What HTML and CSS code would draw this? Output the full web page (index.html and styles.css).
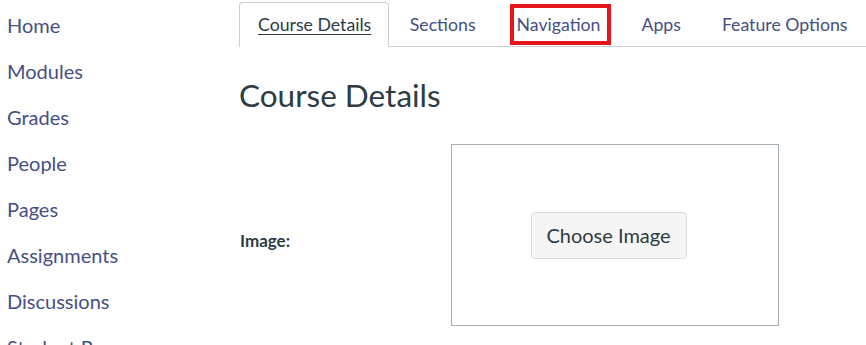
FILE: index.html
```html
<!DOCTYPE html>
<html>
<head>
<meta charset="utf-8">
<link rel="stylesheet" href="styles.css">
</head>
<body>
<div class="page">
  <nav class="sidenav">
    <a class="navlink">Home</a>
    <a class="navlink">Modules</a>
    <a class="navlink">Grades</a>
    <a class="navlink">People</a>
    <a class="navlink">Pages</a>
    <a class="navlink">Assignments</a>
    <a class="navlink">Discussions</a>
    <a class="navlink">Student Resources</a>
  </nav>
  <main class="content">
    <div class="tabs">
      <div class="tab active"><span class="tab-text">Course Details</span></div>
      <div class="tab"><span class="tab-text">Sections</span></div>
      <div class="tab"><span class="tab-text highlighted">Navigation</span></div>
      <div class="tab"><span class="tab-text">Apps</span></div>
      <div class="tab"><span class="tab-text">Feature Options</span></div>
      <div class="tab-fill"></div>
    </div>
    <h1 class="title">Course Details</h1>
    <div class="field">
      <label class="field-label">Image:</label>
      <div class="image-box">
        <button class="btn">Choose Image</button>
      </div>
    </div>
  </main>
</div>
</body>
</html>
```

FILE: styles.css
```css
* { box-sizing: border-box; }
html, body { margin: 0; padding: 0; background: #fff; }
body {
  font-family: Lato, "Noto Sans", sans-serif;
  color: #2d3b45;
  overflow: hidden;
  height: 345px;
}
.page {
  display: flex;
  align-items: flex-start;
}
.sidenav {
  width: 239px;
  flex: none;
  display: flex;
  flex-direction: column;
  padding-left: 7px;
  padding-top: 12px;
}
.navlink {
  font-size: 20px;
  line-height: 26px;
  height: 46px;
  color: #454f85;
  white-space: nowrap;
}
.content {
  flex: 1;
  display: flex;
  flex-direction: column;
  padding-top: 2px;
}
.tabs {
  display: flex;
  align-items: stretch;
  height: 45px;
}
.tab {
  padding: 0 20.5px;
  display: flex;
  align-items: center;
  font-size: 17.7px;
  color: #454f85;
  border-bottom: 1px solid #c7cdd1;
  border-top: 1px solid transparent;
  white-space: nowrap;
}
.tab.active {
  padding: 0 17px 0 18px;
  border: 1px solid #c7cdd1;
  border-bottom-color: #fff;
  border-radius: 4px 4px 0 0;
  color: #2d3b45;
}
.tab.active .tab-text {
  text-decoration: underline;
  text-underline-offset: 3px;
}
.tab-fill {
  flex: 1;
  border-bottom: 1px solid #c7cdd1;
}
.highlighted {
  position: relative;
}
.highlighted::after {
  content: "";
  position: absolute;
  left: -7px;
  right: -11px;
  top: -10px;
  bottom: -10px;
  border: 4px solid #e8141c;
}
.title {
  margin: 28px 0 0 0;
  font-size: 31.5px;
  font-weight: 400;
  line-height: 40px;
  color: #2d3b45;
}
.field {
  display: flex;
  align-items: center;
  margin-top: 29px;
}
.field-label {
  width: 212px;
  padding-left: 1px;
  margin-top: 10px;
  font-size: 17px;
  font-weight: 700;
  color: #2d3b45;
}
.image-box {
  width: 328px;
  height: 182px;
  border: 1px solid #a5afb5;
  display: flex;
  align-items: center;
  justify-content: center;
}
.btn {
  font-family: Lato, "Noto Sans", sans-serif;
  font-size: 20px;
  color: #2d3b45;
  background: #f5f5f5;
  border: 1px solid #dcdcdc;
  border-radius: 4px;
  width: 156px;
  height: 47px;
  padding: 0;
  margin-top: 0;
  margin-right: 13px;
}
```
